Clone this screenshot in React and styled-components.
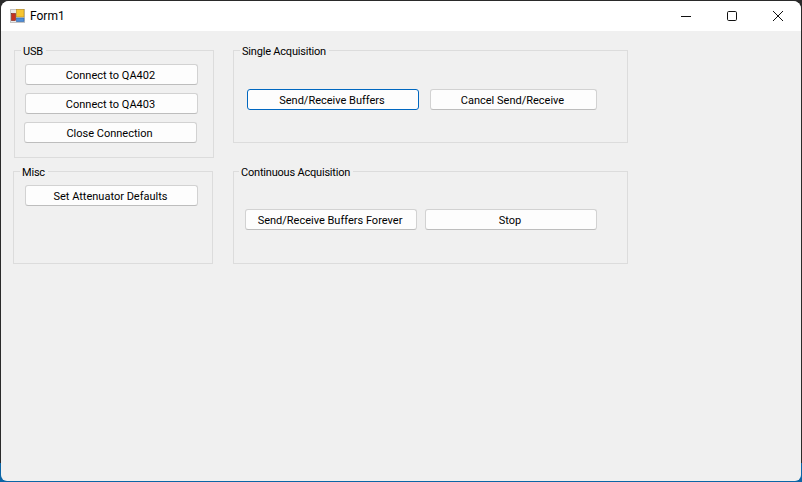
import React from "react";
import styled, { createGlobalStyle } from "styled-components";

const GlobalStyle = createGlobalStyle`
  html, body {
    margin: 0;
    padding: 0;
    overflow: hidden;
  }
  body {
    font-family: Roboto, "Liberation Sans", sans-serif;
    font-size: 11px;
    color: #000;
  }
`;

const Desktop = styled.div`
  box-sizing: border-box;
  width: 802px;
  height: 482px;
  padding: 1px;
  background: linear-gradient(#2a2a2a 0, #2a2a2a 96%, #0b65a6 96%, #0b65a6 100%);
`;

const Window = styled.div`
  display: flex;
  flex-direction: column;
  height: 100%;
  border-radius: 8px 8px 6px 6px;
  overflow: hidden;
  background: #f0f0f0;
`;

const TitleBar = styled.header`
  display: flex;
  align-items: center;
  flex: 0 0 30px;
  padding-left: 9px;
  background: #fff;
`;

const Caption = styled.span`
  flex: 1;
  margin-left: 5px;
  font-size: 12px;
`;

const WinControl = styled.div`
  display: flex;
  align-items: center;
  justify-content: center;
  width: 46px;
  height: 30px;
  svg {
    display: block;
  }
`;

const Client = styled.main`
  display: grid;
  grid-template-columns: 200px 395px;
  grid-template-rows: 114px 99px;
  column-gap: 20px;
  row-gap: 7px;
  padding: 13px 0 0 12px;
`;

const Group = styled.fieldset`
  box-sizing: border-box;
  min-width: 0;
  margin: 0 0 0 ${(p) => p.$indent || 0}px;
  padding: ${(p) => p.$top}px 0 0;
  height: ${(p) => p.$height}px;
  width: ${(p) => p.$width}px;
  border: 1px solid #dcdcdc;
`;

const Legend = styled.legend`
  margin-left: ${(p) => p.$offset ?? 6}px;
  padding: 0 3px 0 2px;
  line-height: 15px;
  height: 13px;
  letter-spacing: -0.2px;
`;

const Stack = styled.div`
  display: flex;
  flex-direction: column;
  gap: 8px;
  padding-left: ${(p) => p.$inset}px;
`;

const Row = styled.div`
  display: flex;
  gap: ${(p) => p.$gap}px;
  padding-left: ${(p) => p.$inset}px;
`;

const Button = styled.button`
  box-sizing: border-box;
  width: ${(p) => p.$width || 173}px;
  height: 21px;
  margin: 0 0 0 ${(p) => p.$nudge || 0}px;
  padding: 1px 2px 0 0;
  font: inherit;
  color: #000;
  background: #fdfdfd;
  border: 1px solid ${(p) => (p.$focused ? "#0067c0" : "#d2d2d2")};
  border-bottom-color: ${(p) => (p.$focused ? "#0067c0" : "#bdbdbd")};
  border-radius: 3px;
`;

function FormIcon() {
  return (
    <svg width="15" height="14" viewBox="0 0 15 14">
      <rect x="0.5" y="0.5" width="14" height="13" fill="#e9e9e9" stroke="#c4c4c4" />
      <rect x="1.5" y="4.5" width="4" height="7" fill="#c8301e" stroke="#7a1c14" strokeWidth="0.6" />
      <rect x="6.5" y="0.5" width="7.5" height="7.5" fill="#f7c531" stroke="#b98a1c" strokeWidth="0.6" />
      <rect x="6.5" y="9" width="7.5" height="3.5" fill="#4f8fd8" stroke="#2b62a8" strokeWidth="0.6" />
    </svg>
  );
}

export default function App() {
  return (
    <>
      <GlobalStyle />
      <Desktop>
        <Window>
          <TitleBar>
            <FormIcon />
            <Caption>Form1</Caption>
            <WinControl>
              <svg width="12" height="12" viewBox="0 0 12 12">
                <path d="M1 6.5h10" stroke="#111" strokeWidth="1" fill="none" />
              </svg>
            </WinControl>
            <WinControl>
              <svg width="12" height="12" viewBox="0 0 12 12">
                <rect x="1.5" y="1.5" width="9" height="9" rx="1.2" stroke="#111" strokeWidth="1" fill="none" />
              </svg>
            </WinControl>
            <WinControl>
              <svg width="12" height="12" viewBox="0 0 12 12">
                <path d="M1 1l10 10M11 1L1 11" stroke="#111" strokeWidth="1" fill="none" />
              </svg>
            </WinControl>
          </TitleBar>
          <Client>
            <Group $height={114} $width={200} $indent={1} $top={7}>
              <Legend>USB</Legend>
              <Stack $inset={10}>
                <Button>Connect to QA402</Button>
                <Button>Connect to QA403</Button>
                <Button $nudge={-1}>Close Connection</Button>
              </Stack>
            </Group>
            <Group $height={99} $width={395} $top={32}>
              <Legend>Single Acquisition</Legend>
              <Row $gap={11} $inset={13}>
                <Button $width={172} $focused>Send/Receive Buffers</Button>
                <Button $width={167}>Cancel Send/Receive</Button>
              </Row>
            </Group>
            <Group $height={99} $width={200} $top={7}>
              <Legend>Misc</Legend>
              <Stack $inset={11}>
                <Button>Set Attenuator Defaults</Button>
              </Stack>
            </Group>
            <Group $height={99} $width={395} $top={31}>
              <Legend $offset={5}>Continuous Acquisition</Legend>
              <Row $gap={8} $inset={11}>
                <Button $width={172}>Send/Receive Buffers Forever</Button>
                <Button $width={172}>Stop</Button>
              </Row>
            </Group>
          </Client>
        </Window>
      </Desktop>
    </>
  );
}
